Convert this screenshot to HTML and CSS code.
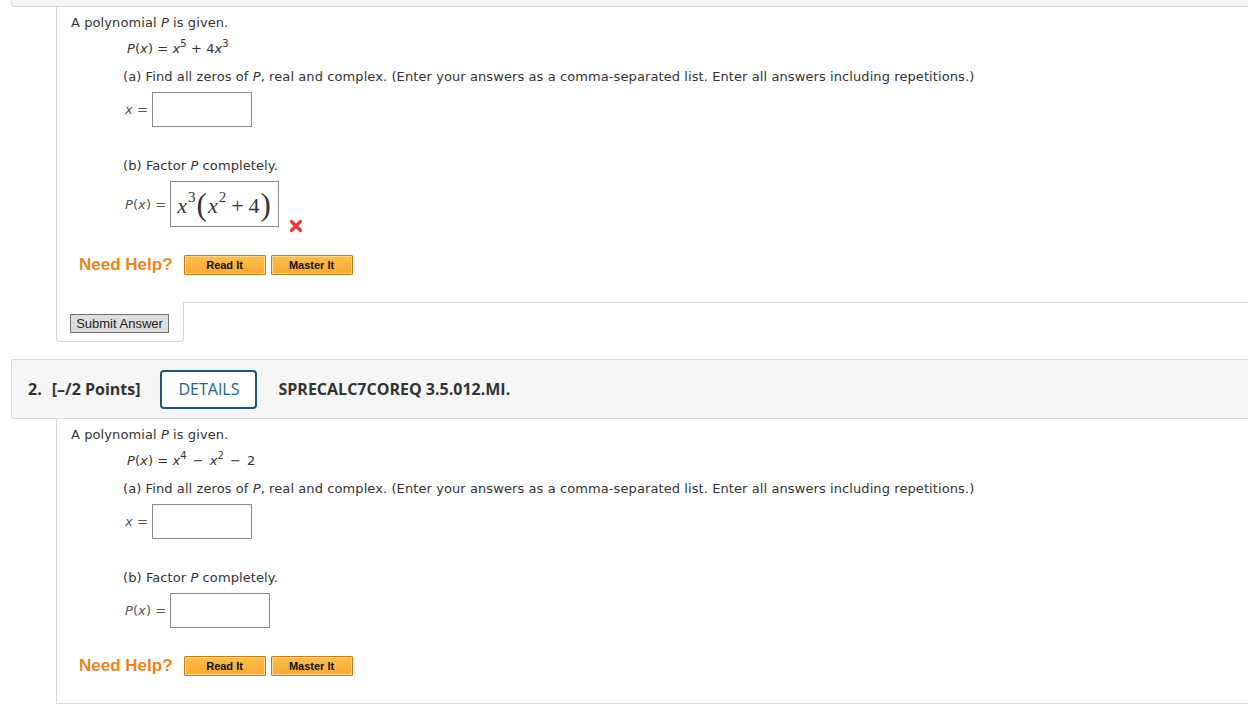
FILE: index.html
```html
<!DOCTYPE html>
<html lang="en">
<head>
    <meta charset="UTF-8">
    <title>Assignment</title>
    <link rel="stylesheet" href="styles.css">
</head>
<body>
    <div class="page">
        <!-- end of question 1 header, scrolled off -->
        <div class="q-head q-head-cut"></div>

        <div class="q-body q-body-open">
            <p class="intro">A polynomial <i>P</i> is given.</p>
            <div class="indent">
                <p class="formula"><i>P</i>(<i>x</i>) = <i>x</i><sup>5</sup> + 4<i>x</i><sup>3</sup></p>
                <p class="part">(a) Find all zeros of <i>P</i>, real and complex. (Enter your answers as a comma-separated list. Enter all answers including repetitions.)</p>
                <div class="answer-row">
                    <span class="label"><i>x</i> =</span>
                    <span class="answer-box"></span>
                </div>
                <p class="part part-b">(b) Factor <i>P</i> completely.</p>
                <div class="answer-row">
                    <span class="label"><i>P</i>(<i>x</i>) =</span>
                    <span class="answer-box math">
                        <span class="expr"><i>x</i><sup>3</sup><span class="paren">(</span><i>x</i><sup>2</sup><span class="op">+</span>4<span class="paren">)</span></span>
                    </span>
                    <svg class="wrong" width="14" height="14" viewBox="0 0 14 14">
                        <path d="M2.5 2.5 L11.5 11.5 M11.5 2.5 L2.5 11.5" stroke="#e5373d" stroke-width="3.2" stroke-linecap="round"/>
                    </svg>
                </div>
            </div>
            <div class="help">
                <span class="help-title">Need Help?</span>
                <button class="help-btn">Read It</button>
                <button class="help-btn">Master It</button>
            </div>
        </div>
        <div class="submit-row">
            <div class="submit-tab">
                <button class="submit-button">Submit Answer</button>
            </div>
            <div class="submit-fill"></div>
        </div>

        <!-- question 2 -->
        <div class="q-head">
            <span class="q-num">2.</span>
            <span class="q-points">[&ndash;/2 Points]</span>
            <button class="details">DETAILS</button>
            <span class="q-code">SPRECALC7COREQ 3.5.012.MI.</span>
        </div>

        <div class="q-body q-body-closed">
            <p class="intro">A polynomial <i>P</i> is given.</p>
            <div class="indent">
                <p class="formula"><i>P</i>(<i>x</i>) = <i>x</i><sup>4</sup><span class="minus">&minus;</span><i>x</i><sup>2</sup><span class="minus">&minus;</span>2</p>
                <p class="part">(a) Find all zeros of <i>P</i>, real and complex. (Enter your answers as a comma-separated list. Enter all answers including repetitions.)</p>
                <div class="answer-row">
                    <span class="label"><i>x</i> =</span>
                    <span class="answer-box"></span>
                </div>
                <p class="part part-b">(b) Factor <i>P</i> completely.</p>
                <div class="answer-row">
                    <span class="label"><i>P</i>(<i>x</i>) =</span>
                    <span class="answer-box"></span>
                </div>
            </div>
            <div class="help">
                <span class="help-title">Need Help?</span>
                <button class="help-btn">Read It</button>
                <button class="help-btn">Master It</button>
            </div>
        </div>
    </div>
</body>
</html>
```

FILE: styles.css
```css
body {
    margin: 0;
    background: #fff;
    font-family: "DejaVu Sans", Verdana, sans-serif;
    font-size: 13px;
    color: #333;
}

p {
    margin: 0;
}

.page {
    padding-left: 11px;
}

/* question header bar */
.q-head {
    display: flex;
    align-items: center;
    height: 58px;
    padding-left: 16px;
    background: #f6f6f6;
    border: 1px solid #dcdcdc;
    border-right: none;
    border-radius: 3px 0 0 3px;
    font-family: "Open Sans", sans-serif;
    font-size: 16px;
    color: #333;
}

.q-head-cut {
    height: 6px;
    border-top: none;
    border-radius: 0 0 0 3px;
}

.q-num {
    font-weight: 700;
    margin-right: 10px;
}

.q-points {
    font-weight: 700;
    margin-right: 20px;
}

.details {
    font-family: "Open Sans", sans-serif;
    font-size: 16px;
    color: #22638d;
    background: #fff;
    border: 2px solid #1b5677;
    border-radius: 4px;
    height: 39px;
    width: 97px;
    padding: 0;
    margin-right: 21px;
}

.q-code {
    font-weight: 700;
}

/* question body */
.q-body {
    margin-left: 45px;
    border-left: 1px solid #d6d6d6;
    padding: 7px 0 0 14px;
    letter-spacing: 0.09px;
}

.q-body-closed {
    border-bottom: 1px solid #d6d6d6;
    padding-bottom: 27px;
}

.q-body-open {
    padding-bottom: 27px;
}

.intro {
    line-height: 18px;
}

.indent {
    padding-left: 52px;
}

.formula {
    line-height: 18px;
    margin-top: 8px;
    padding-left: 4px;
}

.minus {
    margin: 0 6px;
}

sup {
    font-size: 10px;
    line-height: 0;
    vertical-align: 6px;
}

.part {
    line-height: 18px;
    margin-top: 10px;
}

.part-b {
    margin-top: 30px;
}

.answer-row {
    display: flex;
    align-items: center;
    margin-top: 6px;
    padding-left: 2px;
}

.label {
    color: #555;
    margin-right: 4px;
}

.answer-box {
    display: inline-block;
    width: 98px;
    height: 33px;
    border: 1px solid #8a8a8a;
    background: #fff;
}

.answer-box.math {
    width: auto;
    height: 44px;
    padding: 0 6px 0 6px;
    display: flex;
    align-items: center;
    font-family: "Liberation Serif", "Times New Roman", serif;
    font-size: 22px;
    color: #333;
    letter-spacing: 0;
}

.expr {
    white-space: nowrap;
}

.math i {
    font-style: italic;
}

.math sup {
    font-size: 15px;
    font-style: normal;
    vertical-align: 11px;
    margin-left: 1px;
}

.math .paren {
    font-size: 31px;
    line-height: 1;
    margin: 0 1px;
    vertical-align: -2px;
}

.math .op {
    margin: 0 5px;
}

.wrong {
    align-self: flex-end;
    margin: 0 0 -6px 10px;
}

/* need help */
.help {
    display: flex;
    align-items: center;
    height: 20px;
    margin-top: 28px;
    padding-left: 8px;
    letter-spacing: 0;
}

.help-title {
    font-family: "Liberation Sans", Arial, sans-serif;
    font-weight: 700;
    font-size: 17px;
    color: #e8861c;
    margin-right: 11px;
}

.help-btn {
    width: 82px;
    height: 20px;
    margin-right: 5px;
    padding: 0;
    font-family: "Liberation Sans", Arial, sans-serif;
    font-size: 11px;
    font-weight: 700;
    color: #111;
    background: linear-gradient(#fdbf4d, #f9a833);
    border: 1px solid #c57a1c;
    box-shadow: inset 0 0 0 1px #fed98c;
    border-radius: 1px;
}

/* submit tab */
.submit-row {
    display: flex;
    margin-left: 45px;
    margin-bottom: 17px;
}

.submit-tab {
    width: 128px;
    height: 40px;
    padding: 12px 0 0 13px;
    box-sizing: border-box;
    border: 1px solid #d6d6d6;
    border-top: none;
    border-radius: 0 0 4px 4px;
}

.submit-fill {
    flex: 1;
    border-top: 1px solid #d6d6d6;
}

.submit-button {
    font-family: "Liberation Sans", Arial, sans-serif;
    font-size: 13px;
    color: #222;
    background: #dedede;
    border: 1px solid #707070;
    border-radius: 0;
    width: 99px;
    height: 19px;
    padding: 0;
}
```
